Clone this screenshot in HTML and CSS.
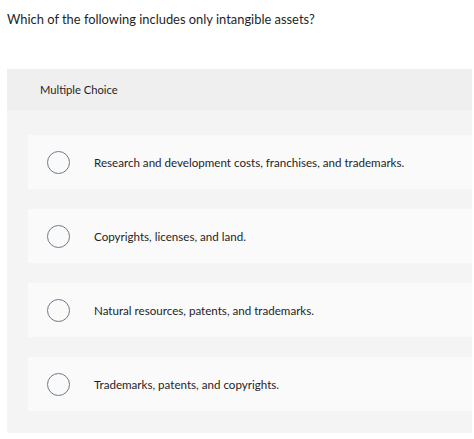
FILE: index.html
```html
<!DOCTYPE html>
<html>
<head>
<meta charset="utf-8">
<link rel="stylesheet" href="styles.css">
</head>
<body>
<div class="page">
  <p class="question">Which of the following includes only intangible assets?</p>
  <div class="panel">
    <div class="panel-head">Multiple Choice</div>
    <div class="options">
      <div class="option"><span class="radio"></span><span class="label">Research and development costs, franchises, and trademarks.</span></div>
      <div class="option"><span class="radio"></span><span class="label">Copyrights, licenses, and land.</span></div>
      <div class="option"><span class="radio"></span><span class="label">Natural resources, patents, and trademarks.</span></div>
      <div class="option"><span class="radio"></span><span class="label">Trademarks, patents, and copyrights.</span></div>
    </div>
  </div>
</div>
</body>
</html>
```
FILE: styles.css
```css
html, body {
  margin: 0;
  padding: 0;
  background: #ffffff;
}
body {
  font-family: Lato, "Liberation Sans", sans-serif;
  color: #1f1f1f;
}
.page {
  padding: 0 2px 0 7px;
}
.question {
  margin: 0;
  padding-top: 10px;
  height: 58px;
  box-sizing: border-box;
  font-size: 12.9px;
  line-height: 18px;
}
.panel {
  margin-top: 11px;
  background: #f4f4f4;
  padding-bottom: 22px;
}
.panel-head {
  background: #efefef;
  height: 41px;
  display: flex;
  align-items: center;
  padding-left: 33px;
  font-size: 11.2px;
}
.options {
  display: flex;
  flex-direction: column;
  gap: 20px;
  padding: 25px 0 0 21px;
}
.option {
  background: #fafafa;
  height: 54px;
  display: flex;
  align-items: center;
}
.radio {
  width: 21px;
  height: 21px;
  border: 1.3px solid #6a7a8c;
  border-radius: 50%;
  margin-left: 19px;
  flex: none;
}
.label {
  margin-left: 24px;
  font-size: 11.6px;
}
```
